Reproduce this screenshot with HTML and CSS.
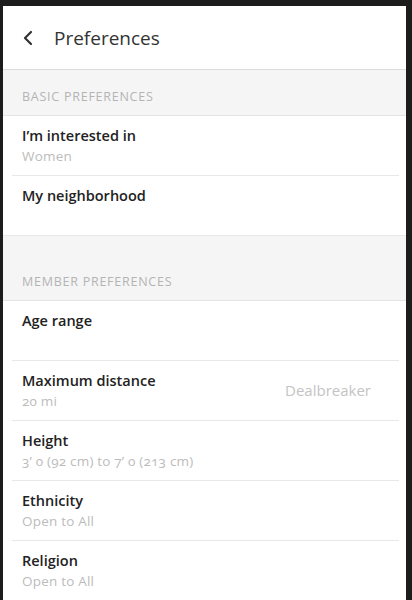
FILE: index.html
```html
<!DOCTYPE html>
<html>
<head>
<meta charset="utf-8">
<link rel="stylesheet" href="styles.css">
</head>
<body>
<div class="frame">
  <div class="screen">
    <header class="topbar">
      <svg class="back" width="12" height="16" viewBox="0 0 12 16"><polyline points="9,2 3,8 9,14" fill="none" stroke="#333" stroke-width="2.2" stroke-linecap="round" stroke-linejoin="round"/></svg>
      <span class="title">Preferences</span>
    </header>
    <div class="section-head first"><span>BASIC PREFERENCES</span></div>
    <div class="group">
      <div class="row"><div class="row-text"><div class="label">I’m interested in</div><div class="sub">Women</div></div></div>
      <div class="row"><div class="row-text"><div class="label">My neighborhood</div></div></div>
    </div>
    <div class="section-head second"><span>MEMBER PREFERENCES</span></div>
    <div class="group">
      <div class="row"><div class="row-text"><div class="label">Age range</div></div></div>
      <div class="row"><div class="row-text"><div class="label">Maximum distance</div><div class="sub">20 mi</div></div><div class="aside">Dealbreaker</div></div>
      <div class="row"><div class="row-text"><div class="label">Height</div><div class="sub">3’ 0 (92 cm) to 7’ 0 (213 cm)</div></div></div>
      <div class="row"><div class="row-text"><div class="label">Ethnicity</div><div class="sub">Open to All</div></div></div>
      <div class="row"><div class="row-text"><div class="label">Religion</div><div class="sub">Open to All</div></div></div>
    </div>
  </div>
</div>
</body>
</html>
```
FILE: styles.css
```css
html, body {
  margin: 0;
  padding: 0;
  background: #1c1c1c;
  height: 600px;
  overflow: hidden;
}
.frame {
  padding: 6px 6px 0 3px;
  height: 594px;
}
.screen {
  background: #fff;
  height: 100%;
  font-family: "Open Sans", "Noto Sans", sans-serif;
  font-variant-numeric: oldstyle-nums;
  overflow: hidden;
}
.topbar {
  display: flex;
  align-items: center;
  border-bottom: 1px solid #dcdcdc;
  box-sizing: border-box;
  height: 64px;
  padding-left: 19px;
  padding-top: 1px;
}
.back {
  margin-right: 20px;
}
.title {
  font-size: 19px;
  color: #333;
  font-weight: 500;
}
.section-head {
  background: #f5f5f5;
  display: flex;
  align-items: flex-end;
  padding-left: 19px;
  box-sizing: border-box;
  border-bottom: 1px solid #e4e4e4;
  font-size: 12.5px;
  color: #b4b4b4;
  letter-spacing: 0.75px;
}
.section-head.first {
  height: 46px;
  padding-bottom: 10px;
}
.section-head.second {
  height: 65px;
  padding-bottom: 10px;
}
.group {
  display: flex;
  flex-direction: column;
}
.row {
  height: 60px;
  box-sizing: border-box;
  padding: 10px 35px 0 19px;
  display: flex;
  justify-content: space-between;
  position: relative;
}
.row::after {
  content: "";
  position: absolute;
  left: 9px;
  right: 7px;
  bottom: 0;
  height: 1px;
  background: #e8e8e8;
}
.group .row:last-child::after {
  left: 0;
  right: 0;
}
.label {
  font-size: 14.5px;
  line-height: 20px;
  color: #222;
  font-weight: 600;
}
.sub {
  font-size: 13.5px;
  line-height: 21px;
  color: #bcbcbc;
  letter-spacing: 0.2px;
}
.aside {
  font-size: 15px;
  color: #c4c4c4;
  line-height: 20px;
  margin-top: 9px;
}
```
